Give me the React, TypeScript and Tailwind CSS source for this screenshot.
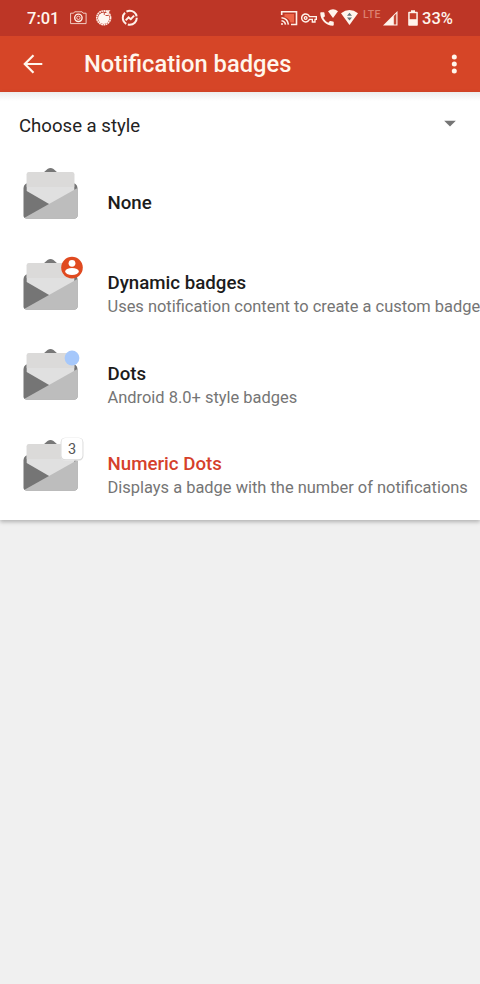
import React from "react";
import {MdArrowDropDown, MdCall, MdOutlineVpnKey} from "react-icons/md";

type Badge = "none" | "dynamic" | "dot" | "numeric";

const styles: {badge: Badge; title: string; summary?: string; selected?: boolean}[] = [
  {badge: "none", title: "None"},
  {badge: "dynamic", title: "Dynamic badges", summary: "Uses notification content to create a custom badge"},
  {badge: "dot", title: "Dots", summary: "Android 8.0+ style badges"},
  {badge: "numeric", title: "Numeric Dots", summary: "Displays a badge with the number of notifications", selected: true},
];

const Envelope = ({badge}: {badge: Badge}) => (
  <svg className="w-[70px] h-[60px] shrink-0" viewBox="20 164 70 60">
    <path d="M43 173l4.500-4q3-1.800 6 0l4.500 4z" fill="#777" />
    <path d="M23.500 188q0-2.500 2-4l2-1h46l2 1q2 1.500 2 4v27.500q0 3-3 3h-48q-3 0-3-3z" fill="#757575" />
    <path d="M26.700 174.500q0-2.500 2.500-2.500h42.600q2.500 0 2.500 2.500v17L50 204.500 26.700 191z" fill="#e0e0e0" />
    <path d="M26.700 174.500q0-2.500 2.500-2.500h42.600q2.500 0 2.500 2.500v12.500H26.700z" fill="#dbdad9" />
    <path d="M77.500 188v27.500q0 3-3 3h-48q-1 0-2-.7z" fill="#bdbdbd" />
    {badge === "dynamic" && (
      <g>
        <circle cx="72" cy="176.600" r="10.800" fill="#e04a20" />
        <circle cx="72" cy="172.300" r="3.400" fill="#fff" />
        <ellipse cx="72" cy="180.500" rx="6.800" ry="3.400" fill="#fff" />
      </g>
    )}
    {badge === "dot" && <circle cx="72" cy="177" r="7.400" fill="#a6c8fb" />}
    {badge === "numeric" && (
      <g>
        <rect x="60.600" y="166" width="22.800" height="22.800" rx="4.500" fill="#e6e6e6" />
        <rect x="60.800" y="165.700" width="22.400" height="22.400" rx="4.300" fill="#d8d8d8" />
        <rect x="61.500" y="165.900" width="21" height="21.400" rx="4" fill="#fff" />
        <text x="72" y="182.300" textAnchor="middle" fontSize="14.500" fill="#555">
          3
        </text>
      </g>
    )}
  </svg>
);

const NotificationIcons = () => (
  <svg className="w-[72px] h-5" viewBox="68 8 72 20" fill="none" stroke="#fff0e8">
    {/* camera */}
    <path d="M70.600 13.200h3l1-1.400h7.500l1 1.400h3v10.400H70.600z" strokeWidth="1" opacity=".8" />
    <circle cx="78.400" cy="17.800" r="3.700" strokeWidth="1.400" />
    <circle cx="78.400" cy="17.800" r="1.700" strokeWidth=".8" />
    {/* timer face */}
    <circle cx="103.700" cy="17.800" r="6.900" strokeWidth="1.600" strokeDasharray="1.800 .5" />
    <circle cx="103.700" cy="18.200" r="5.700" fill="#fff6f0" stroke="none" />
    <path d="M104.300 15v-3M105.500 15.500h3" stroke="#bd3626" strokeWidth=".9" />
    <path d="M105.800 11h3.200l-3 3.200h3.200" strokeWidth="1.300" />
    {/* trend */}
    <circle cx="129.800" cy="17.800" r="7" strokeWidth="2" strokeDasharray="12.900 1.750" />
    <path d="M125.700 20.400l2.900-3 2.200 1.800 3.300-3.600" strokeWidth="2" />
  </svg>
);

const StatusBar = () => (
  <div className="h-9 bg-[#bd3626] flex items-center text-[#fff4ec] text-[16.500px] font-medium">
    <span className="ml-[27px] mt-[2px] w-[41px]">7:01</span>
    <NotificationIcons />
    {/* cast */}
    <svg className="ml-[140px] w-[18px] h-[18px]" viewBox="280 9 18 18" fill="none" stroke="#fff0e8" strokeWidth="1.600">
      <path d="M284.500 14h9.500v8.500h-3.500q-1-4.500-6-5.500z" fill="#ef6547" stroke="none" />
      <path d="M281.700 15v-3.200h14.800v12.700h-5.500M281.500 17.700q6.300.5 6.900 6.900M281.500 20.700q3.500.4 4 3.900" />
      <circle cx="282" cy="24" r="1" fill="#fff0e8" stroke="none" />
    </svg>
    <MdOutlineVpnKey className="ml-[3px] w-4 h-4" />
    <span className="relative w-[18px] h-[18px] ml-[3px]">
      <MdCall className="w-[18px] h-[18px] -ml-0.5 mt-px" />
      <svg className="absolute top-0 right-0 w-[10px] h-[9px]" viewBox="0 0 9 8">
        <path d="M0 2q4.500-3.500 9 0L4.500 8z" fill="currentColor" />
      </svg>
    </span>
    <svg className="ml-[3px] w-[18px] h-4" viewBox="341 10 18 16">
      <path d="M341 13.300q8.500-6.400 17 0l-8.500 11.700z" fill="#fff6ee" />
      <path d="M349.500 12.700l2.500 3.100h-5zM349.500 20.500l2.500-3.100h-5z" fill="#64777c" />
    </svg>
    <span className="ml-1 mb-[6px] w-[18px] text-[10.500px] tracking-[0.300px] leading-none font-medium text-[#dc8070]">LTE</span>
    <svg className="ml-0.5 w-[15px] h-[15px]" viewBox="0 0 15 15">
      <path d="M14.500 0v14.500H0z" fill="#fff4ec" />
      <path d="M10.800 4.900l2.500-2.500v11h-2.500z" fill="#c54935" />
    </svg>
    <svg className="ml-[10px] w-[10px] h-4" viewBox="0 0 10 16">
      <path d="M1 1.700h2V.2h4v1.500h2q.8 0 .8.800v12.600q0 .7-.8.700H1q-.8 0-.8-.7V2.500q0-.8.800-.8z" fill="#fff4ec" />
      <path d="M1.700 3.200h6.600v6H1.700z" fill="#c63f2d" />
    </svg>
    <span className="ml-1 mt-[2px]">33%</span>
  </div>
);

const App = () => {
  return (
    <div className="w-full h-[984px] overflow-hidden bg-[#f0f0f0] font-['Roboto',sans-serif]">
      <StatusBar />
      <header className="h-[56px] pl-[23px] pr-[22px] bg-[#d64527] flex items-center text-[#fff6ec]">
        <svg className="w-5 h-5" viewBox="0 0 20 20" fill="none" stroke="currentColor" strokeWidth="2.200">
          <path d="M19.300 10H2M10.500 1.300L1.800 10l8.700 8.700" />
        </svg>
        <h1 className="ml-[41px] mt-[2px] text-[23.700px] font-medium">Notification badges</h1>
        <svg className="ml-auto w-2 h-5" viewBox="0 0 8 20" fill="currentColor">
          <circle cx="4.300" cy="3" r="2.500" />
          <circle cx="4.300" cy="10" r="2.500" />
          <circle cx="4.300" cy="17" r="2.500" />
        </svg>
      </header>
      <main className="h-[427.500px] bg-white shadow-[0_2px_4px_rgba(0,0,0,0.26)]">
        <div className="h-[65px] pl-[19px] pr-[16px] flex items-center text-[18.600px] text-[#222] bg-[linear-gradient(#ececec,#fff_9px)]">
          <span className="mt-1">Choose a style</span>
          <MdArrowDropDown className="ml-auto -mt-[3px] w-7 h-7 text-[#757575]" />
        </div>
        <ul>
          {styles.map((item) => (
            <li key={item.title} className="h-[90.700px] pl-5 pt-[7px] flex items-start whitespace-nowrap">
              <Envelope badge={item.badge} />
              <div className={`${item.summary ? "pt-[16.400px]" : "pt-[27.400px]"} ml-[17.500px]`}>
                <p className={`${item.selected ? "text-[#d5402b]" : "text-[#1c1c1c]"} text-[18.700px] leading-6 font-medium`}>{item.title}</p>
                {item.summary && <p className="text-[16.450px] leading-6 text-[#757575]">{item.summary}</p>}
              </div>
            </li>
          ))}
        </ul>
      </main>
    </div>
  );
};

export default App;
